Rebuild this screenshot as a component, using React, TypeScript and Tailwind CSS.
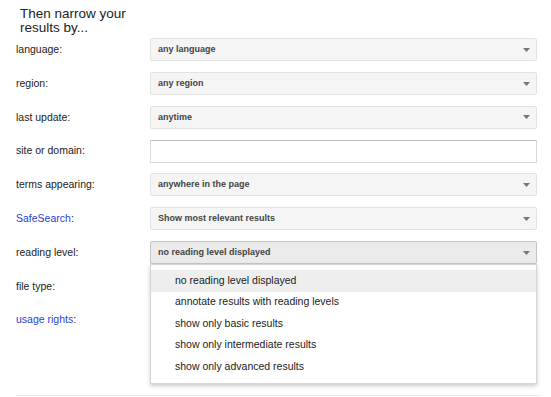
import React from 'react'

const FONT = { fontFamily: '"Liberation Sans", Arial, Helvetica, sans-serif' }

type Row = {
  label: string
  link?: boolean
  kind: 'select' | 'input' | 'none'
  value?: string
  open?: boolean
}

const ROWS: Row[] = [
  { label: 'language:', kind: 'select', value: 'any language' },
  { label: 'region:', kind: 'select', value: 'any region' },
  { label: 'last update:', kind: 'select', value: 'anytime' },
  { label: 'site or domain:', kind: 'input' },
  { label: 'terms appearing:', kind: 'select', value: 'anywhere in the page' },
  { label: 'SafeSearch', link: true, kind: 'select', value: 'Show most relevant results' },
  { label: 'reading level:', kind: 'select', value: 'no reading level displayed', open: true },
  { label: 'file type:', kind: 'none' },
  { label: 'usage rights', link: true, kind: 'none' },
]

const OPTIONS = [
  'no reading level displayed',
  'annotate results with reading levels',
  'show only basic results',
  'show only intermediate results',
  'show only advanced results',
]

function Arrow() {
  return (
    <svg width="7" height="4" viewBox="0 0 7 4" className="shrink-0">
      <path d="M0 0h7L3.5 4z" fill="#777" />
    </svg>
  )
}

function Select({ value, open }: { value: string; open?: boolean }) {
  return (
    <div className="relative">
      <div
        className={
          open
            ? 'flex h-[23px] items-center justify-between rounded-[2px] border border-[#c6c6c6] bg-[#ebebeb] pl-[7px] pr-[6px] shadow-[0_1px_1px_rgba(0,0,0,0.08)]'
            : 'flex h-[23px] items-center justify-between rounded-[2px] border border-[#e3e3e3] bg-[#f5f5f5] pl-[7px] pr-[6px]'
        }
      >
        <span className="text-[9px] font-bold text-[#444]">{value}</span>
        <Arrow />
      </div>
      {open && (
        <div className="absolute left-0 right-0 top-full z-10 border border-[#d6d6d6] bg-white py-[5px] shadow-[0_2px_4px_rgba(0,0,0,0.2)]">
          {OPTIONS.map((o, i) => (
            <div
              key={o}
              className={
                i === 0
                  ? 'flex h-[21.5px] items-center bg-[#eeeeee] pl-[24px] text-[10.5px] text-[#222]'
                  : 'flex h-[21.5px] items-center pl-[24px] text-[10.5px] text-[#222]'
              }
            >
              {o}
            </div>
          ))}
        </div>
      )}
    </div>
  )
}

export default function App() {
  return (
    <div className="w-[551px] h-[397px] overflow-hidden bg-white pl-[16px]" style={FONT}>
      <h2 className="pl-[4px] pt-[7px] text-[13.5px] font-normal leading-[14px] text-[#222]">
        Then narrow your
        <br />
        results by...
      </h2>

      <div className="mt-[3.3px] flex w-[521px] flex-col gap-[10.8px]">
        {ROWS.map((row) => (
          <div key={row.label} className="flex h-[23px] items-center">
            <div className="w-[134px] shrink-0 text-[10.5px] text-[#222]">
              {row.link ? (
                <>
                  <span className="text-[#2a3fd9]">{row.label}</span>:
                </>
              ) : (
                row.label
              )}
            </div>
            <div className="flex-1">
              {row.kind === 'select' && <Select value={row.value!} open={row.open} />}
              {row.kind === 'input' && (
                <div className="h-[23px] rounded-[1px] border border-[#d9d9d9] border-t-[#c0c0c0] bg-white" />
              )}
            </div>
          </div>
        ))}
      </div>

      <div className="mt-[63px] h-px w-[524px] bg-[#ebebeb]" />
    </div>
  )
}
